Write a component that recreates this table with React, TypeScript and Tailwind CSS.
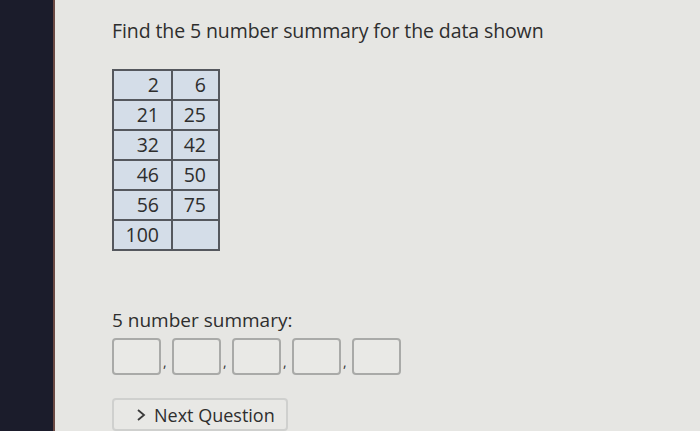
import React from "react";

const rows: [string, string][] = [
  ["2", "6"],
  ["21", "25"],
  ["32", "42"],
  ["46", "50"],
  ["56", "75"],
  ["100", ""],
];

export default function App() {
  return (
    <div
      className="flex w-[700px] h-[431px] overflow-hidden bg-[#e6e6e3]"
      style={{ fontFamily: '"Open Sans", sans-serif' }}
    >
      <div className="w-[55px] shrink-0 bg-[#1b1c2b] border-r-2 border-[#6b4a44]" />
      <div className="flex flex-col pl-[57px] pt-[16px] text-[#2e2e2e]">
        <div className="text-[19.5px] leading-[30px] tracking-[-0.1px]">
          Find the 5 number summary for the data shown
        </div>
        <table className="mt-[23px] border-collapse border-2 border-[#55585e] bg-[#d4dde8] text-[19.5px] w-[108px]">
          <tbody>
            {rows.map((r, i) => (
              <tr key={i} className="h-[30px]">
                <td className="border-2 border-[#55585e] w-[59px] text-right pr-[12px] leading-[26px]">
                  {r[0]}
                </td>
                <td className="border-2 border-[#55585e] text-right pr-[12px] leading-[26px]">
                  {r[1]}
                </td>
              </tr>
            ))}
          </tbody>
        </table>
        <div className="mt-[56px] text-[19px] leading-[26px]">5 number summary:</div>
        <div className="mt-[5px] flex items-end">
          {[0, 1, 2, 3, 4].map((i) => (
            <div key={i} className="flex items-end">
              <div className="w-[49px] h-[37px] rounded-[4px] border-2 border-[#a9aaa8] bg-[#e9e9e6]" />
              {i < 4 && (
                <span className="w-[11px] text-[14px] leading-[14px] pl-[2px] mb-[6px] text-[#333]">,</span>
              )}
            </div>
          ))}
        </div>
        <div className="mt-[23px] w-[176px] h-[36px] rounded-[4px] border-2 border-[#cfd0ce] bg-[#e8e8e5] flex items-center pl-[22px] gap-[8px] text-[18px]">
          <svg width="10" height="14" viewBox="0 0 10 14">
            <path d="M2 2 L8 7 L2 12" stroke="#3a3a3a" strokeWidth="1.8" fill="none" />
          </svg>
          <span className="leading-[24px]">Next Question</span>
        </div>
      </div>
    </div>
  );
}
